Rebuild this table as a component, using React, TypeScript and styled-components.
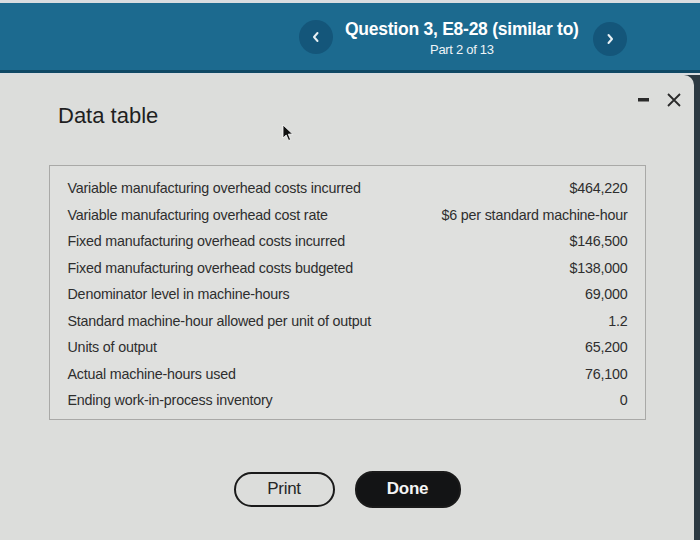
import styled, { createGlobalStyle } from "styled-components";

const GlobalStyle = createGlobalStyle`
  html, body {
    margin: 0;
    padding: 0;
    background: #2c3a42;
  }
  body {
    font-family: "Liberation Sans", Arial, sans-serif;
  }
  *, *::before, *::after {
    box-sizing: border-box;
  }
`;

const Page = styled.div`
  width: 700px;
  height: 540px;
  display: flex;
  flex-direction: column;
  overflow: hidden;
  background: #d9dde0;
`;

const Header = styled.header`
  margin-top: 3px;
  height: 70px;
  background: #1c6a8f;
  border-bottom: 3px solid #0f4864;
  display: flex;
  align-items: center;
  padding-left: 299px;
`;

const NavButton = styled.div<{ $offset?: number }>`
  width: 34px;
  height: 34px;
  border-radius: 50%;
  background: #14567a;
  color: #e8f0f4;
  display: flex;
  align-items: center;
  justify-content: center;
  margin-top: ${(p) => p.$offset ?? 0}px;
`;

const TitleBlock = styled.div`
  margin: 0 14px 0 12px;
  display: flex;
  flex-direction: column;
  align-items: center;
  color: #fff;
  padding-top: 2px;
`;

const Title = styled.div`
  font-size: 17.5px;
  font-weight: bold;
  letter-spacing: -0.25px;
  line-height: 22px;
`;

const Subtitle = styled.div`
  font-size: 13px;
  letter-spacing: -0.3px;
  line-height: 16px;
  margin-top: 2px;
  color: #eef4f7;
`;

const Body = styled.div`
  flex: 1;
  display: flex;
  background: #2c3a42;
  margin-top: 2px;
`;

const Dialog = styled.section`
  position: relative;
  flex: 1;
  margin-right: 6px;
  background: #dcdddb;
  border-top-right-radius: 10px;
  display: flex;
  flex-direction: column;
  align-items: center;
  padding-top: 28px;
`;

const DialogTop = styled.div`
  align-self: stretch;
  display: flex;
  justify-content: space-between;
  padding: 0 12px 0 58px;
`;

const Heading = styled.h2`
  margin: 0;
  font-size: 22px;
  font-weight: normal;
  line-height: 26px;
  color: #1f1f1f;
`;

const WindowControls = styled.div`
  display: flex;
  align-items: center;
  gap: 16px;
  margin-top: -16px;
  height: 26px;
`;

const Cursor = styled.svg`
  position: absolute;
  left: 282px;
  top: 49px;
`;

const Table = styled.div`
  margin-top: 36px;
  width: 597px;
  border: 1px solid #a9a9a7;
  background: #dfe0de;
  padding: 9px 17px 5px 18px;
`;

const Row = styled.div`
  height: 26.5px;
  display: flex;
  align-items: center;
  justify-content: space-between;
  font-size: 14.3px;
  letter-spacing: -0.2px;
  color: #2e2e2e;
`;

const Buttons = styled.div`
  margin-top: 51px;
  display: flex;
  gap: 20px;
`;

const PillButton = styled.button<{ $primary?: boolean }>`
  width: ${(p) => (p.$primary ? 106 : 101)}px;
  height: ${(p) => (p.$primary ? 37 : 35)}px;
  border-radius: 18px;
  border: 2px solid #1a1a1a;
  background: ${(p) => (p.$primary ? "#131415" : "transparent")};
  color: ${(p) => (p.$primary ? "#f4f4f4" : "#262626")};
  font-family: "Liberation Sans", Arial, sans-serif;
  font-size: 17px;
  font-weight: ${(p) => (p.$primary ? "bold" : "normal")};
  letter-spacing: -0.3px;
  display: flex;
  align-items: center;
  justify-content: center;
  align-self: center;
`;

const rows: [string, string][] = [
  ["Variable manufacturing overhead costs incurred", "$464,220"],
  ["Variable manufacturing overhead cost rate", "$6 per standard machine-hour"],
  ["Fixed manufacturing overhead costs incurred", "$146,500"],
  ["Fixed manufacturing overhead costs budgeted", "$138,000"],
  ["Denominator level in machine-hours", "69,000"],
  ["Standard machine-hour allowed per unit of output", "1.2"],
  ["Units of output", "65,200"],
  ["Actual machine-hours used", "76,100"],
  ["Ending work-in-process inventory", "0"],
];

function Chevron({ dir }: { dir: "left" | "right" }) {
  return (
    <svg width="10" height="12" viewBox="0 0 10 12">
      <path
        d={dir === "left" ? "M6.5 2 L3 6 L6.5 10" : "M3.5 2 L7 6 L3.5 10"}
        fill="none"
        stroke="currentColor"
        strokeWidth="2"
        strokeLinecap="round"
        strokeLinejoin="round"
      />
    </svg>
  );
}

function App() {
  return (
    <Page>
      <GlobalStyle />
      <Header>
        <NavButton>
          <Chevron dir="left" />
        </NavButton>
        <TitleBlock>
          <Title>Question 3, E8-28 (similar to)</Title>
          <Subtitle>Part 2 of 13</Subtitle>
        </TitleBlock>
        <NavButton $offset={4}>
          <Chevron dir="right" />
        </NavButton>
      </Header>
      <Body>
        <Dialog>
          <DialogTop>
            <Heading>Data table</Heading>
            <WindowControls>
              <svg width="12" height="6" viewBox="0 0 12 6">
                <rect x="0" y="1" width="11" height="3.5" fill="#2a2a2a" />
              </svg>
              <svg width="16" height="16" viewBox="0 0 16 16">
                <path d="M2 2 L14 14 M14 2 L2 14" stroke="#2a2a2a" strokeWidth="1.8" />
              </svg>
            </WindowControls>
          </DialogTop>
          <Cursor width="12" height="18" viewBox="0 0 12 18">
            <path d="M1 1 L1 14 L4.2 11 L6.6 16.5 L8.6 15.6 L6.3 10.2 L10.6 10 Z" fill="#111" stroke="#fff" strokeWidth="0.8" />
          </Cursor>
          <Table>
            {rows.map(([label, value]) => (
              <Row key={label}>
                <span>{label}</span>
                <span>{value}</span>
              </Row>
            ))}
          </Table>
          <Buttons>
            <PillButton>Print</PillButton>
            <PillButton $primary>Done</PillButton>
          </Buttons>
        </Dialog>
      </Body>
    </Page>
  );
}

export default App;
